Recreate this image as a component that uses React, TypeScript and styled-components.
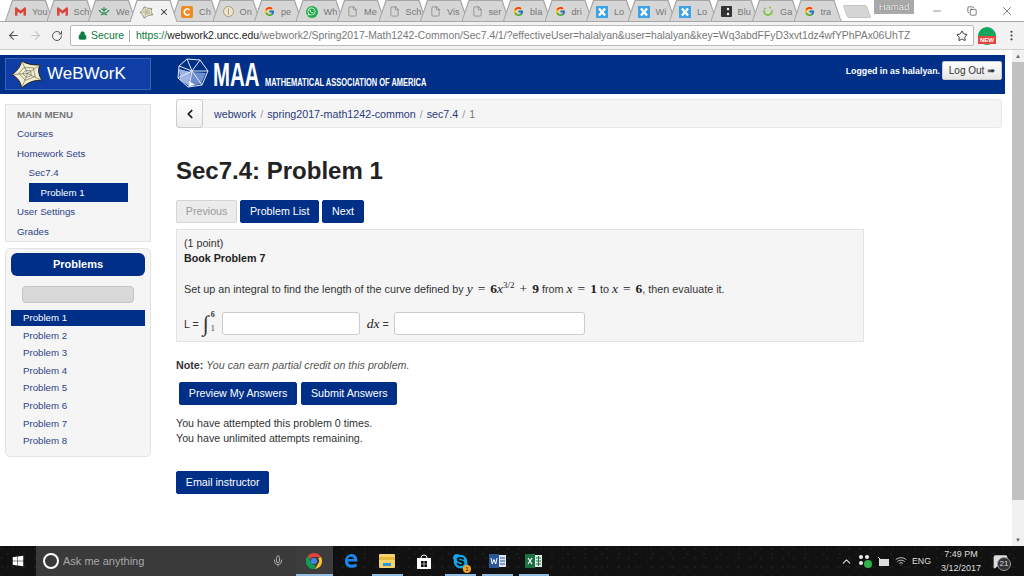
import * as React from 'react'
import styled, { createGlobalStyle } from 'styled-components'
import { ArrowLeft, ArrowRight, RotateCw, Lock, Star, MoreVertical, Minus, X, Copy, ChevronLeft, Mic, File, ChevronUp, Wifi, MessageSquare } from 'lucide-react'
import { FcGoogle } from 'react-icons/fc'
import { FaWhatsapp, FaWindows, FaSkype } from 'react-icons/fa'
import { SiGmail } from 'react-icons/si'

const GlobalStyle = createGlobalStyle`
  html, body { margin: 0; padding: 0; width: 1024px; height: 576px; overflow: hidden; background: #fff; }
  * { box-sizing: border-box; }
  body { font-family: "Liberation Sans", Arial, sans-serif; }
`

const Screen = styled.div`
  width: 1024px;
  height: 576px;
  display: flex;
  flex-direction: column;
`

/* browser chrome */
const TabStrip = styled.div`
  height: 22px;
  padding-left: 5px;
  display: flex;
  background: #fff;
  border-bottom: 1px solid #a8a8a8;
  position: relative;
`
const Tab = styled.div<{ $active?: boolean }>`
  width: 48px;
  margin-right: -6.5px;
  height: ${p => (p.$active ? 22 : 21)}px;
  flex: none;
  position: relative;
  z-index: ${p => (p.$active ? 2 : 1)};
  background: #a6a6a6;
  clip-path: polygon(0 100%, 7px 0, 41px 0, 100% 100%);
  &::before {
    content: '';
    position: absolute;
    inset: 1px 1px 0 1px;
    background: ${p => (p.$active ? '#f2f2f2' : '#d6d6d6')};
    clip-path: polygon(0 100%, 7px 0, 39px 0, 100% 100%);
  }
`
const TabInner = styled.div`
  position: relative;
  height: 100%;
  padding: 2px 0 0 10px;
  display: flex;
  align-items: center;
  gap: 6px;
  font-size: 9.2px;
  color: #777;
  white-space: nowrap;
`
const TabLabel = styled.span`
  width: 17px;
`
const NewTab = styled.div`
  width: 24px;
  height: 13px;
  margin: 5px 0 0 10px;
  flex: none;
  background: #d6d6d6;
  transform: skewX(20deg);
  border: 1px solid #c4c4c4;
  border-radius: 2px;
`
const WindowControls = styled.div`
  margin-left: auto;
  display: flex;
  height: 21px;
  color: #222;
`
const UserBadge = styled.div`
  width: 40px;
  height: 14px;
  margin-right: 5px;
  background: #a9a9a9;
  color: #fff;
  font-size: 9.5px;
  text-align: center;
  line-height: 14px;
  text-shadow: 0 0 1px #333;
`
const WindowButton = styled.div`
  width: 35px;
  display: flex;
  align-items: center;
  justify-content: center;
`
const Toolbar = styled.div`
  height: 28px;
  background: #f2f2f2;
  border-bottom: 1px solid #cfcfcf;
  display: flex;
  align-items: center;
  padding: 0 6px 0 7px;
  color: #555;
`
const NavIcons = styled.div`
  width: 63px;
  flex: none;
  display: flex;
  align-items: center;
  gap: 9px;
`
const Omnibox = styled.div`
  width: 904px;
  flex: none;
  height: 21px;
  background: #fff;
  border: 1px solid #b9b9b9;
  border-radius: 2px;
  display: flex;
  align-items: center;
  padding: 0 5px 0 7px;
  font-size: 10.4px;
  white-space: nowrap;
  color: #777;
`
const Secure = styled.span`
  color: #0b7a3b;
  display: flex;
  align-items: center;
  gap: 4px;
  padding-right: 5px;
  margin-right: 6px;
  border-right: 1px solid #aaa;
  height: 12px;
`
const UrlHost = styled.span`
  color: #222;
`
const UrlScheme = styled.span`
  color: #0b7a3b;
`
const BoxEnd = styled.span`
  margin-left: auto;
  display: flex;
`
const Extension = styled.div`
  width: 18px;
  height: 18px;
  flex: none;
  margin-left: 4px;
  position: relative;
  border-radius: 50%;
  background: #12a65c;
`
const NewBadge = styled.span`
  position: absolute;
  left: 0;
  top: 9px;
  width: 18px;
  height: 8px;
  background: #e8453c;
  color: #fff;
  font-size: 6px;
  font-weight: bold;
  line-height: 8px;
  text-align: center;
`
const MenuDots = styled(MoreVertical)`
  flex: none;
  margin-left: 8.5px;
`

/* page */
const Viewport = styled.div`
  flex: 1;
  min-height: 0;
  display: flex;
`
const Page = styled.div`
  flex: 1;
  padding: 5px 6px 0 0;
  min-width: 0;
`
const Scrollbar = styled.div`
  width: 12px;
  margin-left: 1px;
  background: #f1f1f1;
  display: flex;
  flex-direction: column;
  align-items: center;
  font-size: 6px;
  color: #666;
`
const ScrollThumb = styled.div`
  width: 100%;
  height: 438px;
  margin-bottom: auto;
  background: #c1c1c1;
`
const ScrollArrow = styled.span`
  height: 12px;
  line-height: 12px;
`
const Banner = styled.div`
  height: 39px;
  background: #002f87;
  display: flex;
  align-items: flex-start;
  padding: 3px 3px 0 5px;
  color: #fff;
`
const WwBrand = styled.div`
  width: 146px;
  height: 32px;
  background: #0f3fa6;
  border: 1px solid #3a63b5;
  display: flex;
  align-items: center;
  padding-left: 6px;
  gap: 4px;
  font-size: 17px;
`
const MaaBrand = styled.div`
  margin-left: 25px;
  display: flex;
  align-items: flex-start;
  height: 32px;
`
const MaaLetters = styled.span`
  display: block;
  width: 48px;
  margin-left: 4px;
  font-size: 34px;
  line-height: 32px;
  font-weight: bold;
  transform: scaleX(0.6);
  transform-origin: left top;
  white-space: nowrap;
`
const MaaName = styled.span`
  display: block;
  width: 163px;
  margin: 18px 0 0 4px;
  font-size: 11px;
  line-height: 12px;
  font-weight: bold;
  transform: scaleX(0.68);
  transform-origin: left top;
  white-space: nowrap;
`
const LoginArea = styled.div`
  margin-left: auto;
  display: flex;
  align-items: center;
  gap: 2px;
  font-size: 8.8px;
  font-weight: bold;
  height: 25px;
`
const LogOut = styled.div`
  width: 60px;
  height: 19px;
  background: linear-gradient(#fff, #e6e6e6);
  border: 1px solid #ccc;
  border-radius: 2px;
  color: #333;
  font-weight: normal;
  font-size: 10px;
  line-height: 17px;
  text-align: center;
`
const Columns = styled.div`
  display: grid;
  grid-template-columns: 146px 826px;
  column-gap: 25px;
  padding: 5px 0 0 5px;
  font-size: 10.7px;
`
const SideColumn = styled.div`
  padding-top: 5px;
  display: flex;
  flex-direction: column;
  gap: 6px;
  font-size: 9.7px;
`
const MenuBox = styled.div`
  height: 138px;
  background: #f5f5f5;
  border: 1px solid #e3e3e3;
  padding: 0 0 0 11px;
`
const MenuHeading = styled.div`
  height: 19px;
  line-height: 19px;
  font-weight: bold;
  color: #777;
`
const MenuLink = styled.div<{ $level?: number; $current?: boolean }>`
  height: 19.5px;
  line-height: 19.5px;
  margin-left: ${p => (p.$level ?? 0) * 11.5}px;
  width: ${p => (p.$current ? '99px' : 'auto')};
  padding-left: ${p => (p.$current ? '12px' : '0')};
  background: ${p => (p.$current ? '#002f87' : 'transparent')};
  color: ${p => (p.$current ? '#fff' : '#2f3f88')};
`
const ProblemsBox = styled.div`
  height: 209px;
  background: #f5f5f5;
  border: 1px solid #e3e3e3;
  border-radius: 5px;
  padding: 4px 5px 0;
`
const ProblemsHead = styled.div`
  height: 23px;
  background: #002f87;
  border-radius: 6px;
  color: #fff;
  font-weight: bold;
  font-size: 11px;
  line-height: 23px;
  text-align: center;
`
const ProgressTrack = styled.div`
  width: 112px;
  height: 17px;
  margin: 10px auto 7px;
  background: #d9d9d9;
  border: 1px solid #c4c4c4;
  border-radius: 4px;
`
const ProblemLink = styled.div<{ $current?: boolean }>`
  height: ${p => (p.$current ? 16 : 17.6)}px;
  margin-bottom: ${p => (p.$current ? 1.6 : 0)}px;
  line-height: 16px;
  padding-left: 12px;
  background: ${p => (p.$current ? '#002f87' : 'transparent')};
  color: ${p => (p.$current ? '#fff' : '#2f3f88')};
`
const MainColumn = styled.div`
  color: #333;
`
const Crumbs = styled.div`
  height: 29px;
  background: #f5f5f5;
  border: 1px solid #e8e8e8;
  border-radius: 3px;
  display: flex;
  align-items: center;
  gap: 11px;
  color: #2b3a7a;
`
const BackButton = styled.div`
  width: 27px;
  height: 29px;
  margin: 0 0 0 -1px;
  background: linear-gradient(#fff, #ededed);
  border: 1px solid #ccc;
  border-radius: 3px;
  color: #111;
  display: flex;
  align-items: center;
  justify-content: center;
`
const CrumbSep = styled.span`
  color: #999;
  margin: 0 4px;
`
const CrumbActive = styled.span`
  color: #777;
`
const Title = styled.h1`
  margin: 29px 0 15px;
  font-size: 24px;
  line-height: 28px;
  font-weight: bold;
  color: #222;
`
const ButtonRow = styled.div`
  display: flex;
  gap: 3px;
`
const Action = styled.div<{ $disabled?: boolean }>`
  height: 23px;
  padding: 0 8.8px;
  border-radius: 2px;
  border: 1px solid ${p => (p.$disabled ? '#d4d4d4' : '#002f87')};
  background: ${p => (p.$disabled ? '#ececec' : '#002f87')};
  color: ${p => (p.$disabled ? '#999' : '#fff')};
  line-height: 21px;
  white-space: nowrap;
`
const ProblemBox = styled.div`
  width: 688px;
  height: 113px;
  margin-top: 6px;
  background: #f5f5f5;
  border: 1px solid #e3e3e3;
  padding: 6px 7px 7px;
  color: #333;
`
const PointLine = styled.div`
  height: 15px;
  line-height: 14px;
`
const BookLine = styled.div`
  height: 15px;
  line-height: 15px;
  font-weight: bold;
  color: #222;
`
const Prompt = styled.div`
  margin-top: 15px;
  height: 15px;
  line-height: 15px;
  font-size: 10.8px;
  white-space: nowrap;
`
const MathText = styled.span`
  font-family: "Liberation Serif", serif;
  font-size: 13.5px;
  font-weight: bold;
  color: #222;
`
const Var = styled.i`
  font-weight: normal;
`
const MathOp = styled.span`
  font-weight: normal;
  margin: 0 5px;
`
const Power = styled.sup`
  font-size: 9px;
  line-height: 0;
  font-weight: normal;
`
const Answer = styled.div`
  margin-top: 16px;
  display: flex;
  align-items: center;
  height: 23px;
  gap: 4px;
`
const IntegralMark = styled.span`
  font-family: "Liberation Serif", serif;
  font-style: italic;
  font-size: 22px;
  line-height: 22px;
  width: 15px;
  position: relative;
`
const Limit = styled.span<{ $top?: boolean }>`
  position: absolute;
  left: 8px;
  top: ${p => (p.$top ? '-3px' : '11px')};
  font-size: 8px;
  line-height: 10px;
  font-weight: ${p => (p.$top ? 'bold' : 'normal')};
  font-style: normal;
`
const Field = styled.input<{ $w: number }>`
  width: ${p => p.$w}px;
  height: 23px;
  background: #fff;
  border: 1px solid #ccc;
  border-radius: 3px;
  padding: 0;
`
const DxLabel = styled.span`
  margin: 0 1px 0 3px;
`
const Note = styled.div`
  margin-top: 16px;
  height: 15px;
  line-height: 15px;
  color: #333;
`
const NoteText = styled.em`
  color: #555;
`
const SubmitRow = styled.div`
  display: flex;
  gap: 4px;
  margin: 9px 0 11px 3px;
`
const Status = styled.div`
  height: 15px;
  line-height: 15px;
  color: #333;
`
const EmailRow = styled.div`
  margin-top: 25px;
  display: flex;
`

/* taskbar */
const Taskbar = styled.div`
  height: 30px;
  flex: none;
  background-color: #111;
  background-image: radial-gradient(circle at 2px 3px, #1c1c1c 1px, transparent 1.5px), radial-gradient(circle at 7px 8px, #191919 1px, transparent 2px);
  background-size: 11px 9px, 17px 13px;
  color: #ddd;
  display: flex;
  align-items: center;
`
const StartButton = styled.div`
  width: 36px;
  height: 100%;
  display: flex;
  align-items: center;
  justify-content: center;
  color: #fff;
`
const SearchBox = styled.div`
  width: 260px;
  height: 100%;
  background: #3a3a3a;
  display: flex;
  align-items: center;
  padding: 0 12px 0 7px;
  gap: 4px;
  color: #a8a8a8;
  font-size: 11px;
`
const CortanaRing = styled.span`
  width: 16px;
  height: 16px;
  border: 2px solid #fff;
  border-radius: 50%;
`
const MicSlot = styled.span`
  margin-left: auto;
  display: flex;
`
const TaskApps = styled.div`
  display: flex;
  height: 100%;
`
const TaskApp = styled.div<{ $active?: boolean; $open?: boolean }>`
  width: 36.6px;
  height: 100%;
  display: flex;
  align-items: center;
  justify-content: center;
  background: ${p => (p.$active ? '#3c3c3c' : 'transparent')};
  position: relative;
  &::after {
    content: '';
    position: absolute;
    left: ${p => (p.$active ? 0 : 3)}px;
    right: ${p => (p.$active ? 0 : 3)}px;
    bottom: 0;
    height: 2px;
    background: ${p => (p.$open ? '#8fbbe0' : 'transparent')};
  }
`
const SkypeDot = styled.span`
  position: absolute;
  right: 8px;
  bottom: 3px;
  width: 8px;
  height: 8px;
  border-radius: 50%;
  background: #f5a623;
  color: #111;
  font-size: 6px;
  line-height: 8px;
  text-align: center;
`
const Tray = styled.div`
  margin-left: auto;
  display: flex;
  align-items: center;
  height: 100%;
  gap: 5px;
  padding-right: 12px;
  font-size: 8.8px;
`
const Clock = styled.div`
  width: 44px;
  margin-left: 3px;
  text-align: center;
  font-size: 9px;
  line-height: 14px;
`
const Notify = styled.div`
  width: 24px;
  display: flex;
  justify-content: center;
  position: relative;
`
const NotifyCount = styled.span`
  position: absolute;
  left: 9px;
  top: 3px;
  width: 14px;
  height: 14px;
  border-radius: 50%;
  background: #333;
  border: 1px solid #999;
  font-size: 8px;
  line-height: 12px;
  text-align: center;
`
const WhatsappDot = styled.span`
  width: 12px;
  height: 12px;
  flex: none;
  border-radius: 50%;
  background: #1fae4b;
  color: #fff;
  display: flex;
  align-items: center;
  justify-content: center;
`

const WebworkStar = ({ size }: { size: number }) => (
  <svg width={size} height={size} viewBox="0 0 32 32">
    <path d="M10 2 Q18 7 29 6 Q25 13 31 22 Q19 21 10 30 Q9 21 0 16 Q8 11 10 2 Z" fill="#f3eecb" stroke="#222" strokeWidth="1" />
    <path d="M16 15 L10 2 M16 15 L29 6 M16 15 L31 22 M16 15 L10 30 M16 15 L0 16 M12 9 L22 9 L24 18 L14 22 L7 15 Z M14 12 L19 12 L20 17 L15 19 L11 15 Z" fill="none" stroke="#555" strokeWidth="0.6" />
  </svg>
)

const MaaMark = () => (
  <svg width="33" height="30" viewBox="0 0 33 30">
    <polygon points="3,11 15,14 13,28 4,22" fill="#9db4e4" />
    <polygon points="15,14 30,15 25,26 13,28" fill="#6f8dcf" />
    <polygon points="13,23 19,27 13,28" fill="#fff" />
    <g fill="none" stroke="#e4ebf9" strokeWidth="1">
      <polygon points="11,1 24,2 32,13 26,27 12,29 2,20 3,8" />
      <path d="M11 1 L16 13 L32 13 M16 13 L13 29 M16 13 L3 8 M16 13 L2 20 M24 2 L16 13 M16 13 L26 27" />
    </g>
  </svg>
)

const Chrome = ({ size }: { size: number }) => (
  <svg width={size} height={size} viewBox="0 0 16 16">
    <path d="M8 0a8 8 0 0 1 7 4H8a4 4 0 0 0-3.7 2.400L1.700 2.900A8 8 0 0 1 8 0z" fill="#db4437" />
    <path d="M15 4a8 8 0 0 1-6 12l3-5.300A4 4 0 0 0 12 5z" fill="#fbc02d" />
    <path d="M9 16A8 8 0 0 1 1.700 2.900L5 8.500A4 4 0 0 0 9 12z" fill="#0f9d58" />
    <circle cx="8" cy="8" r="3" fill="#4285f4" />
  </svg>
)

const XSquare = () => (
  <svg width="12" height="12" viewBox="0 0 12 12">
    <rect width="12" height="12" fill="#3aa3e8" />
    <path d="M3 2.500 L9 9.500 M9 2.500 L3 9.500" stroke="#fff" strokeWidth="2.400" />
    <path d="M4.500 4 L7.500 4 L6 6 Z" fill="#f3e08a" />
  </svg>
)

const Favicon = ({ kind }: { kind: string }) => {
  switch (kind) {
    case 'gmail':
      return <SiGmail size={11} color="#d9463c" />
    case 'leaf':
      return <svg width="12" height="11" viewBox="0 0 12 11"><path d="M1 4c2 4 8 4 10 0M3 9c2-1.500 4-1.500 6 0M6 1v4M3.500 2.500L6 5l2.500-2.500" fill="none" stroke="#2f8f5b" strokeWidth="1.100" /></svg>
    case 'star':
      return <WebworkStar size={13} />
    case 'chegg':
      return <svg width="12" height="12" viewBox="0 0 12 12"><rect width="12" height="12" rx="2" fill="#ef8a22" /><path d="M8.500 4A3 3 0 1 0 8.500 8" fill="none" stroke="#fff" strokeWidth="1.700" /></svg>
    case 'seal':
      return <svg width="11" height="11" viewBox="0 0 11 11"><circle cx="5.500" cy="5.500" r="5" fill="#eee5cf" stroke="#a89a76" /><path d="M5.500 2.500v6" stroke="#a89a76" /></svg>
    case 'google':
      return <FcGoogle size={11} />
    case 'whatsapp':
      return <WhatsappDot><FaWhatsapp size={9} /></WhatsappDot>
    case 'doc':
      return <File size={11} color="#666" strokeWidth={1.2} />
    case 'x':
      return <XSquare />
    case 'blu':
      return <svg width="11" height="11" viewBox="0 0 11 11"><rect width="11" height="11" rx="1" fill="#333" /><circle cx="7" cy="3" r="1.200" fill="#fff" /><circle cx="7" cy="8" r="1.200" fill="#fff" /></svg>
    case 'ga':
      return <svg width="12" height="12" viewBox="0 0 12 12"><path d="M2 5a4 4 0 1 0 8 0M3 2.500h.100M8 1.500h.100" fill="none" stroke="#7fc241" strokeWidth="1.800" strokeLinecap="round" /></svg>
    default:
      return null
  }
}

const tabs = [
  ['gmail', 'You'], ['gmail', 'Sch'], ['leaf', 'We'], ['star', ''], ['chegg', 'Ch'],
  ['seal', 'On'], ['google', 'pe'], ['whatsapp', 'Wh'], ['doc', 'Me'], ['doc', 'Sch'],
  ['doc', 'Vis'], ['doc', 'ser'], ['google', 'bla'], ['google', 'dri'], ['x', 'Lo'],
  ['x', 'Wi'], ['x', 'Lo'], ['blu', 'Blu'], ['ga', 'Ga'], ['google', 'tra'],
]

const problems = [1, 2, 3, 4, 5, 6, 7, 8]

export default function App() {
  return (
    <Screen>
      <GlobalStyle />
      <TabStrip>
        {tabs.map(([kind, label], i) => (
          <Tab key={i} $active={kind === 'star'}>
            <TabInner>
              <Favicon kind={kind} />
              {kind === 'star' ? <X size={10} color="#333" strokeWidth={2.5} /> : <TabLabel>{label}</TabLabel>}
            </TabInner>
          </Tab>
        ))}
        <NewTab />
        <WindowControls>
          <UserBadge>Hamad</UserBadge>
          <WindowButton><Minus size={12} strokeWidth={1} /></WindowButton>
          <WindowButton><Copy size={10} strokeWidth={1.4} /></WindowButton>
          <WindowButton><X size={14} strokeWidth={1} /></WindowButton>
        </WindowControls>
      </TabStrip>
      <Toolbar>
        <NavIcons>
          <ArrowLeft size={13} />
          <ArrowRight size={13} color="#c4c4c4" />
          <RotateCw size={12} />
        </NavIcons>
        <Omnibox>
          <Secure><Lock size={9} fill="#0b7a3b" />Secure</Secure>
          <UrlScheme>https://</UrlScheme>
          <UrlHost>webwork2.uncc.edu</UrlHost>
          /webwork2/Spring2017-Math1242-Common/Sec7.4/1/?effectiveUser=halalyan&amp;user=halalyan&amp;key=Wq3abdFFyD3xvt1dz4wfYPhPAx06UhTZ
          <BoxEnd><Star size={12} color="#333" /></BoxEnd>
        </Omnibox>
        <Extension><NewBadge>NEW</NewBadge></Extension>
        <MenuDots size={13} color="#444" />
      </Toolbar>
      <Viewport>
        <Page>
          <Banner>
            <WwBrand><WebworkStar size={31} />WeBWorK</WwBrand>
            <MaaBrand>
              <MaaMark />
              <MaaLetters>MAA</MaaLetters>
              <MaaName>MATHEMATICAL ASSOCIATION OF AMERICA</MaaName>
            </MaaBrand>
            <LoginArea>
              Logged in as halalyan.
              <LogOut>Log Out ➠</LogOut>
            </LoginArea>
          </Banner>
          <Columns>
            <SideColumn>
              <MenuBox>
                <MenuHeading>MAIN MENU</MenuHeading>
                <MenuLink>Courses</MenuLink>
                <MenuLink>Homework Sets</MenuLink>
                <MenuLink $level={1}>Sec7.4</MenuLink>
                <MenuLink $level={1} $current>Problem 1</MenuLink>
                <MenuLink>User Settings</MenuLink>
                <MenuLink>Grades</MenuLink>
              </MenuBox>
              <ProblemsBox>
                <ProblemsHead>Problems</ProblemsHead>
                <ProgressTrack />
                {problems.map(n => (
                  <ProblemLink key={n} $current={n === 1}>Problem {n}</ProblemLink>
                ))}
              </ProblemsBox>
            </SideColumn>
            <MainColumn>
              <Crumbs>
                <BackButton><ChevronLeft size={14} strokeWidth={3} /></BackButton>
                <span>
                  webwork<CrumbSep>/</CrumbSep>spring2017-math1242-common<CrumbSep>/</CrumbSep>sec7.4<CrumbSep>/</CrumbSep><CrumbActive>1</CrumbActive>
                </span>
              </Crumbs>
              <Title>Sec7.4: Problem 1</Title>
              <ButtonRow>
                <Action $disabled>Previous</Action>
                <Action>Problem List</Action>
                <Action>Next</Action>
              </ButtonRow>
              <ProblemBox>
                <PointLine>(1 point)</PointLine>
                <BookLine>Book Problem 7</BookLine>
                <Prompt>
                  Set up an integral to find the length of the curve defined by{' '}
                  <MathText><Var>y</Var><MathOp>=</MathOp>6<Var>x</Var><Power>3/2</Power><MathOp>+</MathOp>9</MathText>{' '}
                  from <MathText><Var>x</Var><MathOp>=</MathOp>1</MathText> to <MathText><Var>x</Var><MathOp>=</MathOp>6</MathText>, then evaluate it.
                </Prompt>
                <Answer>
                  L = <IntegralMark>∫<Limit $top>6</Limit><Limit>1</Limit></IntegralMark>
                  <Field $w={138} aria-label="integrand" />
                  <DxLabel><MathText><Var>dx</Var></MathText> =</DxLabel>
                  <Field $w={191} aria-label="answer" />
                </Answer>
              </ProblemBox>
              <Note><b>Note:</b> <NoteText>You can earn partial credit on this problem.</NoteText></Note>
              <SubmitRow>
                <Action>Preview My Answers</Action>
                <Action>Submit Answers</Action>
              </SubmitRow>
              <Status>You have attempted this problem 0 times.</Status>
              <Status>You have unlimited attempts remaining.</Status>
              <EmailRow><Action>Email instructor</Action></EmailRow>
            </MainColumn>
          </Columns>
        </Page>
        <Scrollbar>
          <ScrollArrow>▲</ScrollArrow>
          <ScrollThumb />
          <ScrollArrow>▼</ScrollArrow>
        </Scrollbar>
      </Viewport>
      <Taskbar>
        <StartButton><FaWindows size={12} /></StartButton>
        <SearchBox>
          <CortanaRing />
          Ask me anything
          <MicSlot><Mic size={12} color="#aaa" /></MicSlot>
        </SearchBox>
        <TaskApps>
          <TaskApp $active $open><Chrome size={16} /></TaskApp>
          <TaskApp><svg width="16" height="16" viewBox="0 0 16 16"><path d="M2 8.500C2 3 6 1 9 1c3.500 0 5.500 3 5.500 7.500H5c0 3.500 4.500 4 8.500 2v3.500C8 16 2 14.500 2 8.500zM5 6h6c0-3-5.500-3-6 0z" fill="#1c86ee" /></svg></TaskApp>
          <TaskApp $open><svg width="16" height="14" viewBox="0 0 16 14"><rect width="16" height="14" rx="1" fill="#f6d36b" /><rect y="3" width="16" height="3" fill="#e8b93e" /><rect x="4" y="9" width="8" height="3" fill="#2e9bd8" /></svg></TaskApp>
          <TaskApp><svg width="14" height="15" viewBox="0 0 14 15"><path d="M4 4a3 3 0 0 1 6 0" fill="none" stroke="#fff" /><rect y="4" width="14" height="11" fill="#fff" /><path d="M4 7h2.700v2.700H4zM7.300 7H10v2.700H7.300zM4 10.300h2.700V13H4zM7.300 10.300H10V13H7.300z" fill="#111" /></svg></TaskApp>
          <TaskApp $open><FaSkype size={17} color="#12a5e8" /><SkypeDot>1</SkypeDot></TaskApp>
          <TaskApp $open><svg width="17" height="14" viewBox="0 0 17 14"><rect x="7" y="1" width="10" height="12" fill="#dfe7f5" /><rect x="0" y="0" width="10" height="14" fill="#2a5699" /><path d="M11 4h5M11 7h5M11 10h5" stroke="#2a5699" /><path d="M2 4l1.300 6L5 5.500 6.700 10 8 4" fill="none" stroke="#fff" /></svg></TaskApp>
          <TaskApp $open><svg width="17" height="14" viewBox="0 0 17 14"><rect x="7" y="1" width="10" height="12" fill="#dff0e3" /><rect x="0" y="0" width="10" height="14" fill="#1d7044" /><path d="M11 4h5M11 7h5M11 10h5M13.500 2v10" stroke="#1d7044" /><path d="M3 4l4 6M7 4l-4 6" stroke="#fff" strokeWidth="1.200" /></svg></TaskApp>
        </TaskApps>
        <Tray>
          <ChevronUp size={13} />
          <svg width="14" height="14" viewBox="0 0 14 14"><circle cx="3" cy="3" r="2" fill="#eee" /><circle cx="9" cy="3" r="2" fill="#eee" /><circle cx="3" cy="9" r="2" fill="#eee" /><circle cx="10" cy="10" r="4" fill="#2eb24c" /></svg>
          <svg width="13" height="11" viewBox="0 0 13 11"><rect x="2" y="3" width="10" height="7" fill="#ddd" /><path d="M1 1l2 2" stroke="#ddd" /></svg>
          <Wifi size={12} color="#bbb" />
          <span>ENG</span>
          <Clock>7:49 PM<br />3/12/2017</Clock>
          <Notify><MessageSquare size={15} fill="#ddd" color="#ddd" /><NotifyCount>21</NotifyCount></Notify>
        </Tray>
      </Taskbar>
    </Screen>
  )
}
